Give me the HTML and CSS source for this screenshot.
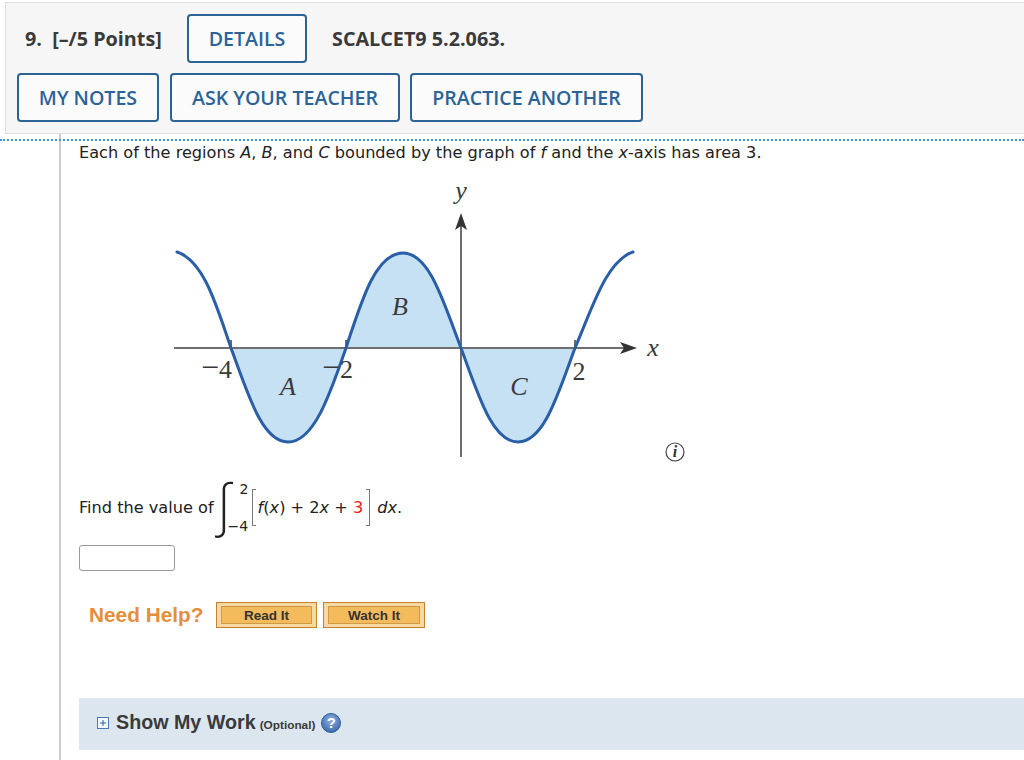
FILE: index.html
```html
<!DOCTYPE html>
<html>
<head>
    <meta charset="utf-8">
    <link rel="stylesheet" href="styles.css">
</head>

<body>

<div class="question_head">
    <div class="head_row">
        <span class="points">9.&nbsp; [–/5 Points]</span>
        <a class="btn btn_details">DETAILS</a>
        <span class="code">SCALCET9 5.2.063.</span>
    </div>
    <div class="head_row head_row_btns">
        <a class="btn btn_notes">MY NOTES</a>
        <a class="btn btn_ask">ASK YOUR TEACHER</a>
        <a class="btn btn_practice">PRACTICE ANOTHER</a>
    </div>
</div>
<div class="dots"></div>

<div class="question_body">
    <p class="intro">Each of the regions <i>A</i>, <i>B</i>, and <i>C</i> bounded by the graph of <i>f</i> and the <i>x</i>-axis has area 3.</p>

    <svg class="graph" width="620" height="285" viewBox="110 178 620 285">
        <path class="area" d="M231 349 C248 395 262 443 288 443 C314 443 330 395 346 349 Z"/>
        <path class="area" d="M346 349 C362 300 376 254 403 254 C430 254 444 305 461 349 Z"/>
        <path class="area" d="M461 349 C478 395 492 443 518 443 C544 443 558 395 575 349 Z"/>
        <path class="axis" d="M174 349 H625 M461 458 V226 M231 349 V341 M346 349 V341 M575 349 V341"/>
        <path class="tip" d="M637 349 L620 343 L624 349 L620 355 Z M461 214 L455 231 L461 227 L467 231 Z"/>
        <path class="curve" d="M177 253 C205 262 218 312 231 349 C248 395 262 443 288 443 C314 443 330 395 346 349 C362 300 376 254 403 254 C430 254 444 305 461 349 C478 395 492 443 518 443 C544 443 558 395 575 349 C592 310 606 262 633 253"/>
        <text class="lbl it" x="461" y="200" text-anchor="middle">y</text>
        <text class="lbl it" x="653" y="357" text-anchor="middle">x</text>
        <text class="lbl" x="232" y="379" text-anchor="end"><tspan class="minus">−</tspan>4</text>
        <text class="lbl" x="353" y="379" text-anchor="end"><tspan class="minus">−</tspan>2</text>
        <text class="lbl" x="579" y="381" text-anchor="middle">2</text>
        <text class="lbl it" x="288" y="396" text-anchor="middle">A</text>
        <text class="lbl it" x="400" y="316" text-anchor="middle">B</text>
        <text class="lbl it" x="519" y="396" text-anchor="middle">C</text>
        <circle class="info" cx="675" cy="453" r="9"/>
        <text class="info_i" x="675" y="458" text-anchor="middle">i</text>
    </svg>

    <div class="formula">
        <span>Find the value of</span>
        <span class="integral">
            <span class="int_sign">∫</span>
            <span class="int_top">2</span>
            <span class="int_bot">−4</span>
        </span>
        <span class="bracket bracket_l"></span>
        <span class="inner"><i>f</i>(<i>x</i>) + 2<i>x</i> + <span class="red">3</span></span>
        <span class="bracket bracket_r"></span>
        <span class="dx"><i>dx</i>.</span>
    </div>

    <div class="answer"></div>

    <div class="help">
        <span class="need">Need Help?</span>
        <a class="help_btn help_read"><span>Read It</span></a>
        <a class="help_btn"><span>Watch It</span></a>
    </div>

    <div class="work">
        <span class="plus">
            <svg width="12" height="12" viewBox="0 0 12 12">
                <rect x="0.5" y="0.5" width="11" height="11" fill="#f4f7fb" stroke="#4a78b8"/>
                <path d="M3 6 H9 M6 3 V9" stroke="#2f5f9f" stroke-width="1"/>
            </svg>
        </span>
        <span class="work_title">Show My Work</span>
        <span class="optional">(Optional)</span>
        <span class="question_icon">?</span>
    </div>
</div>

</body>
</html>
```

FILE: styles.css
```css
html, body {
    margin: 0;
    padding: 0;
    height: 100%;
    overflow: hidden;
    background: #fff;
}
body {
    display: flex;
    flex-direction: column;
    font-family: "DejaVu Sans", sans-serif;
    color: #222;
}
.question_head {
    margin: 2px 0 0 5px;
    padding: 11px 0 11px 11px;
    height: 108px;
    background: #f6f6f6;
    border: 1px solid #dfdfdf;
    border-right: 0;
    font-family: "Open Sans", sans-serif;
    font-weight: 600;
    font-size: 19.6px;
    color: #3a3a3a;
}
.head_row {
    display: flex;
    align-items: center;
    height: 49px;
}
.head_row_btns {
    margin-top: 10px;
}
.btn {
    box-sizing: border-box;
    display: flex;
    align-items: center;
    justify-content: center;
    height: 49px;
    border: 2px solid #2b6397;
    border-radius: 4px;
    background: #fbfbfb;
    color: #2b6397;
}
.points {
    margin-left: 8px;
    width: 162px;
    font-weight: 700;
    font-size: 19.75px;
    white-space: nowrap;
}
.btn_details {
    width: 120px;
}
.code {
    margin-left: 25px;
    font-weight: 700;
    font-size: 19.75px;
}
.btn_notes {
    width: 142px;
}
.btn_ask {
    width: 230px;
    margin-left: 11px;
}
.btn_practice {
    width: 233px;
    margin-left: 10px;
}
.dots {
    position: relative;
    margin-top: 5px;
    border-top: 2px dotted #4a90d9;
    height: 0;
}
.question_body {
    flex: 1;
    margin: -7px 0 0 59px;
    padding: 7px 0 0 18px;
    border-left: 2px solid #ccc;
}
.intro {
    margin: 0;
    padding-top: 2px;
    font-size: 16.15px;
    line-height: 20px;
}
.graph {
    display: block;
    margin: 14px 0 0 31px;
}
.area {
    fill: #c6e1f4;
}
.axis {
    fill: none;
    stroke: #6e6e6e;
    stroke-width: 2;
}
.tip {
    fill: #333;
}
.curve {
    fill: none;
    stroke: #2a5ea6;
    stroke-width: 3;
    stroke-linecap: round;
}
.lbl {
    font-family: "Liberation Serif", serif;
    font-size: 26px;
    fill: #3a3a3a;
}
.minus {
    font-size: 32px;
}
.it {
    font-style: italic;
}
.info {
    fill: #fff;
    stroke: #444;
    stroke-width: 1.2;
}
.info_i {
    font-family: "Liberation Serif", serif;
    font-style: italic;
    font-weight: bold;
    font-size: 16px;
    fill: #333;
}
.formula {
    display: flex;
    align-items: center;
    height: 60px;
    margin-top: 15px;
    font-size: 16.15px;
}
.integral {
    position: relative;
    width: 38px;
    height: 60px;
}
.int_sign {
    position: absolute;
    left: 2px;
    top: -7px;
    font-family: "Inter", sans-serif;
    font-weight: 200;
    font-size: 56px;
    line-height: 70px;
    color: #222;
}
.int_top, .int_bot {
    position: absolute;
    font-size: 14px;
    line-height: 16px;
}
.int_top {
    left: 26px;
    top: 4px;
}
.int_bot {
    left: 14px;
    top: 41px;
}
.bracket {
    box-sizing: border-box;
    width: 4px;
    height: 37px;
    border: solid #777;
    border-width: 1.5px 0;
}
.bracket_l {
    border-left-width: 1.5px;
    border-left-style: solid;
}
.bracket_r {
    margin-left: 3px;
    border-right-width: 1.5px;
    border-right-style: solid;
}
.inner {
    margin-left: 2px;
}
.red {
    color: #f01c14;
}
.dx {
    margin-left: 7px;
}
.answer {
    box-sizing: border-box;
    width: 96px;
    height: 26px;
    margin-top: 8px;
    background: #fff;
    border: 1px solid #999;
    border-radius: 3px;
}
.help {
    display: flex;
    align-items: center;
    margin: 31px 0 0 10px;
    font-family: "Liberation Sans", sans-serif;
    font-weight: bold;
}
.need {
    width: 127px;
    font-size: 20.8px;
    color: #e48e3c;
}
.help_btn {
    box-sizing: border-box;
    display: flex;
    width: 102px;
    height: 26px;
    margin-right: 6px;
    padding: 3px 4px;
    background: #f6d9a2;
    border: 1px solid #c8802f;
    font-size: 13.5px;
    color: #333;
}
.help_read {
    width: 101px;
}
.help_btn span {
    flex: 1;
    display: flex;
    align-items: center;
    justify-content: center;
    background: #f3bb5b;
    border: 1px solid #cf9a4a;
}
.work {
    box-sizing: border-box;
    display: flex;
    align-items: center;
    height: 52px;
    margin-top: 70px;
    padding: 0 0 3px 18px;
    background: #dce6ef;
    font-family: "Liberation Sans", sans-serif;
    font-weight: bold;
    color: #3a3a3a;
}
.plus {
    display: flex;
    margin-right: 7px;
}
.work_title {
    font-size: 19.7px;
}
.optional {
    margin: 4px 6px 0 4px;
    font-size: 11.8px;
}
.question_icon {
    box-sizing: border-box;
    display: flex;
    align-items: center;
    justify-content: center;
    width: 20px;
    height: 20px;
    border: 1px solid #2c5aa0;
    border-radius: 50%;
    background: radial-gradient(circle at 50% 35%, #8fb0de, #2c5aa0);
    color: #fff;
    font-size: 15px;
}
```
